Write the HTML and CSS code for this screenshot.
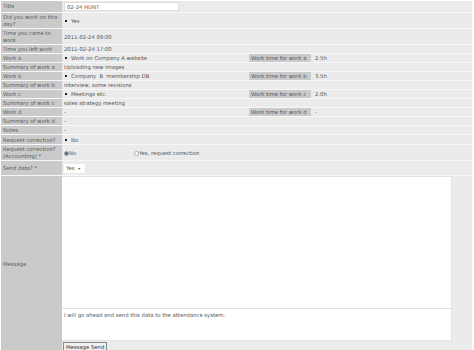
FILE: index.html
```html
<!DOCTYPE html>
<html lang="en">
<head>
  <meta charset="UTF-8">
  <title>Attendance report</title>
  <link rel="stylesheet" href="styles.css">
</head>
<body>
  <table class="form">
    <colgroup>
      <col class="c-label">
      <col class="c-value">
      <col class="c-sub">
      <col>
    </colgroup>
    <tr class="first">
      <th>Title</th>
      <td colspan="3"><input type="text" class="title-input" value="02-24 HUNT"></td>
    </tr>
    <tr>
      <th>Did you work on this day?</th>
      <td colspan="3"><span class="sq"></span>Yes</td>
    </tr>
    <tr>
      <th>Time you came to work</th>
      <td colspan="3">2011-02-24 09:00</td>
    </tr>
    <tr>
      <th>Time you left work</th>
      <td colspan="3">2011-02-24 17:00</td>
    </tr>
    <tr>
      <th>Work a</th>
      <td><span class="sq"></span>Work on Company A website</td>
      <td class="sub">Work time for work a</td>
      <td>2.5h</td>
    </tr>
    <tr>
      <th>Summary of work a</th>
      <td colspan="3">Uploading new images</td>
    </tr>
    <tr>
      <th>Work b</th>
      <td><span class="sq"></span>Company &nbsp;B &nbsp;membership DB</td>
      <td class="sub">Work time for work b</td>
      <td>3.5h</td>
    </tr>
    <tr>
      <th>Summary of work b</th>
      <td colspan="3">interview, some revisions</td>
    </tr>
    <tr>
      <th>Work c</th>
      <td><span class="sq"></span>Meetings etc.</td>
      <td class="sub">Work time for work c</td>
      <td>2.0h</td>
    </tr>
    <tr>
      <th>Summary of work c</th>
      <td colspan="3">sales strategy meeting</td>
    </tr>
    <tr>
      <th>Work d</th>
      <td>-</td>
      <td class="sub">Work time for work d</td>
      <td>-</td>
    </tr>
    <tr>
      <th>Summary of work d</th>
      <td colspan="3">-</td>
    </tr>
    <tr>
      <th>Notes</th>
      <td colspan="3">-</td>
    </tr>
    <tr class="tall">
      <th>Request correction?</th>
      <td colspan="3"><span class="sq"></span>No</td>
    </tr>
    <tr>
      <th>Request correction? (Accounting) *</th>
      <td colspan="3">
        <div class="radios">
          <label class="radio"><span class="dot on"></span>No</label>
          <label class="radio"><span class="dot"></span>Yes, request correction</label>
        </div>
      </td>
    </tr>
    <tr class="send">
      <th>Send data? *</th>
      <td colspan="3"><span class="select">Yes <span class="caret">&#9662;</span></span></td>
    </tr>
    <tr>
      <th class="msg-label">Message</th>
      <td colspan="3" class="msg">
        <div class="area"></div>
        <div class="area note">I will go ahead and send this data to the attendance system.</div>
        <button class="send-btn">Message Send</button>
      </td>
    </tr>
  </table>
</body>
</html>
```

FILE: styles.css
```css
body {
  margin: 0;
  background: #ffffff;
  font-family: "DejaVu Sans", Verdana, sans-serif;
  font-size: 5.3px;
  line-height: 7px;
  color: #555;
}
.form {
  margin: 1px 0 0 1px;
  width: 471px;
  border-collapse: collapse;
  table-layout: fixed;
}
.c-label {
  width: 61px;
}
.c-value {
  width: 187px;
}
.c-sub {
  width: 63px;
}
.form th,
.form td {
  padding: 1px 2px 0;
  border-bottom: 1px solid #f7f7f7;
  vertical-align: middle;
  text-align: left;
  font-weight: normal;
}
.form th {
  background: #cacaca;
  color: #5a5a5a;
}
.form td {
  background: #ebebeb;
}
.form td.sub {
  background: #cacaca;
  border-top: 1px solid #ebebeb;
  border-right: 2px solid #ebebeb;
  padding: 0 2px;
  white-space: nowrap;
}
.first td,
.first th {
  padding-top: 1px;
  padding-bottom: 1px;
}
.title-input {
  display: block;
  width: 115px;
  height: 9px;
  margin: 0;
  padding: 0 2px;
  border: 1px solid #dcdcdc;
  background: #fff;
  font: inherit;
  color: #555;
  box-sizing: border-box;
}
.sq {
  display: inline-block;
  width: 2px;
  height: 2px;
  background: #222;
  margin: 0 4px 1px 1px;
  vertical-align: middle;
}
.tall td,
.tall th {
  padding-top: 2px;
}
.radios {
  display: flex;
  white-space: nowrap;
}
.radio {
  width: 70px;
}
.dot {
  display: inline-block;
  width: 3px;
  height: 3px;
  border: 1px solid #aaa;
  border-radius: 50%;
  background: #fff;
  vertical-align: -1px;
}
.dot.on {
  background: #666;
}
.send td,
.send th {
  padding-top: 3px;
  padding-bottom: 2px;
}
.select {
  display: inline-block;
  background: #fff;
  padding: 1px 2px;
  width: 17px;
}
.caret {
  font-size: 4px;
  margin-left: 2px;
}
.form td.msg {
  padding: 0 20px 0 0;
}
.area {
  box-sizing: border-box;
  height: 133px;
  background: #fff;
  border: 1px solid #e2e2e2;
  border-width: 1px 1px 1px 0;
}
.note {
  height: 32px;
  padding: 3px 2px 0;
  border-top: 0;
}
.send-btn {
  display: block;
  margin: 1px 0 0 1px;
  padding: 0 2px;
  height: 10px;
  font: inherit;
  color: #333;
  background: #f0f0f0;
  border: 1px solid #888;
}
```
